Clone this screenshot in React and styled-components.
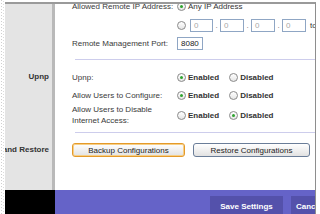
import React from 'react';
import styled, { createGlobalStyle } from 'styled-components';

const GlobalStyle = createGlobalStyle`
  *, *::before, *::after { box-sizing: border-box; }
  html, body {
    margin: 0;
    padding: 0;
    background: #fff;
    overflow: hidden;
  }
  body {
    font-family: "Liberation Sans", Arial, sans-serif;
    font-size: 8px;
    color: #333;
  }
`;

const Screen = styled.div`
    display: flex;
    width: 320px;
    height: 214px;
`;

const Edge = styled.div`
    width: 5px;
    flex-shrink: 0;
    background:
        repeating-linear-gradient(to bottom, #cfcfcf 0 1px, transparent 1px 3px) 1px 0 / 1px 100% no-repeat,
        repeating-linear-gradient(to bottom, transparent 0 1px, #dcdcdc 1px 2px, transparent 2px 3px) 3px 0 / 1px 100% no-repeat;
`;

const Window = styled.div`
    width: 311px;
    height: 212px;
    margin-top: 2px;
    border-top: 2px solid #9a9a9a;
    border-right: 1px solid #8e8e8e;
    display: flex;
    flex-direction: column;
    overflow: hidden;
`;

const Main = styled.div`
    flex: 1;
    display: flex;
    flex-direction: column;
    overflow: hidden;
`;

const Scroll = styled.div`
    flex: 1;
    margin-top: -7px;
    display: flex;
    flex-direction: column;
`;

const Section = styled.div`
    display: flex;
    flex: ${p => (p.$fill ? 1 : 'none')};
`;

const Label = styled.div`
    width: 50px;
    flex-shrink: 0;
    background: #e4e4e4;
    border-right: 3px solid #b9b9b9;
    display: flex;
    justify-content: flex-end;
    align-items: flex-start;
    padding: ${p => p.$top || 0}px 3px 0 0;
    line-height: ${p => p.$lh || 14}px;
    font-weight: bold;
    color: #333;
    white-space: nowrap;
    overflow: hidden;
`;

const Body = styled.div`
    flex: 1;
    min-width: 0;
    padding: ${p => p.$top || 0}px 0 ${p => p.$bottom || 0}px 17px;
`;

const Row = styled.div`
    display: flex;
    align-items: center;
    height: ${p => p.$h}px;
    white-space: nowrap;
`;

const FieldName = styled.div`
    width: 105px;
    flex-shrink: 0;
    line-height: 11px;
    color: #3a3a3a;
`;

const Value = styled.div`
    display: flex;
    align-items: center;
`;

const Option = styled.label`
    display: inline-flex;
    align-items: center;
    gap: 2px;
    margin-right: ${p => (p.$last ? 0 : 10)}px;
    font-weight: ${p => (p.$bold ? 'bold' : 'normal')};
    color: #333;
`;

const RadioMark = styled.span`
    width: 9px;
    height: 9px;
    border-radius: 50%;
    border: 1px solid #8a8a8a;
    background: linear-gradient(#ffffff, #e6e6e6);
    display: inline-flex;
    align-items: center;
    justify-content: center;
    margin-right: ${p => p.$gap || 0}px;

    &::after {
        content: '';
        width: 3px;
        height: 3px;
        border-radius: 50%;
        background: ${p => (p.$on ? '#2fa32f' : 'transparent')};
    }
`;

const IpBox = styled.div`
    width: ${p => p.$w || 24}px;
    height: 13px;
    border: 1px solid #8fa6c4;
    padding-left: 3px;
    line-height: 11px;
    color: ${p => (p.$dim ? '#a8a8a8' : '#222')};
    flex-shrink: 0;
`;

const Dot = styled.span`
    width: 7px;
    text-align: center;
    color: #777;
    flex-shrink: 0;
`;

const RangeWord = styled.span`
    margin-left: 4px;
    color: #333;
`;

const Rule = styled.div`
    height: 1px;
    margin: ${p => p.$top}px 0 0 3px;
    background: #cdcdec;
`;

const Buttons = styled.div`
    display: flex;
    gap: 8px;
    height: 14px;
`;

const Button = styled.button`
    width: ${p => p.$w}px;
    height: 14px;
    padding: 0;
    border: 1px solid ${p => (p.$focus ? '#e49a2a' : '#6a7d98')};
    border-radius: 3px;
    box-shadow: ${p => (p.$focus ? '0 0 0 1px #f7cf86 inset' : 'none')};
    background: linear-gradient(#ffffff, #e2e2e2);
    font-family: "Liberation Sans", Arial, sans-serif;
    font-size: 8px;
    color: #222;
`;

const Footer = styled.div`
    height: 24px;
    flex-shrink: 0;
    display: flex;
`;

const FooterSide = styled.div`
    width: 50px;
    flex-shrink: 0;
    background: #000;
`;

const FooterBar = styled.div`
    flex: 1;
    background: #6563c8;
    display: flex;
    align-items: flex-start;
    gap: 8px;
    padding: 6px 0 0 155px;
    white-space: nowrap;
    overflow: hidden;
`;

const BarButton = styled.button`
    width: ${p => p.$w}px;
    height: 20px;
    flex-shrink: 0;
    border: none;
    padding: 0;
    background: #5451ab;
    color: #fff;
    font-family: "Liberation Sans", Arial, sans-serif;
    font-size: 8px;
    font-weight: bold;
    text-align: ${p => (p.$left ? 'left' : 'center')};
    padding-left: ${p => (p.$left ? 5 : 0)}px;
`;

const Radio = ({ on, children, bold, last }) => (
    <Option $bold={bold} $last={last}>
        <RadioMark $on={on} />
        {children}
    </Option>
);

const Toggle = ({ enabled }) => (
    <Value>
        <Radio on={enabled} bold>Enabled</Radio>
        <Radio on={!enabled} bold last>Disabled</Radio>
    </Value>
);

export default function App() {
    return (
        <>
            <GlobalStyle />
            <Screen>
                <Edge />
                <Window>
                    <Main>
                        <Scroll>
                            <Section>
                                <Label />
                                <Body>
                                    <Row $h={18}>
                                        <FieldName>Allowed Remote IP Address:</FieldName>
                                        <Value>
                                            <Radio on last>Any IP Address</Radio>
                                        </Value>
                                    </Row>
                                    <Row $h={21}>
                                        <FieldName />
                                        <Value>
                                            <RadioMark $gap={4} />
                                            <IpBox $dim $w={23}>0</IpBox>
                                            <Dot>.</Dot>
                                            <IpBox $dim>0</IpBox>
                                            <Dot>.</Dot>
                                            <IpBox $dim>0</IpBox>
                                            <Dot>.</Dot>
                                            <IpBox $dim>0</IpBox>
                                            <RangeWord>to</RangeWord>
                                        </Value>
                                    </Row>
                                    <Row $h={14}>
                                        <FieldName>Remote Management Port:</FieldName>
                                        <IpBox $w={26}>8080</IpBox>
                                    </Row>
                                </Body>
                            </Section>
                            <Section>
                                <Label />
                                <Body><Rule $top={9} /></Body>
                            </Section>
                            <Section>
                                <Label $top={8} $lh={18}>Upnp</Label>
                                <Body $top={8}>
                                    <Row $h={18}>
                                        <FieldName>Upnp:</FieldName>
                                        <Toggle enabled />
                                    </Row>
                                    <Row $h={18}>
                                        <FieldName>Allow Users to Configure:</FieldName>
                                        <Toggle enabled />
                                    </Row>
                                    <Row $h={22}>
                                        <FieldName>Allow Users to Disable<br />Internet Access:</FieldName>
                                        <Toggle enabled={false} />
                                    </Row>
                                </Body>
                            </Section>
                            <Section>
                                <Label />
                                <Body><Rule $top={6} /></Body>
                            </Section>
                            <Section>
                                <Label $top={10} $lh={14}>Backup and Restore</Label>
                                <Body $top={10}>
                                    <Buttons>
                                        <Button $w={113} $focus>Backup Configurations</Button>
                                        <Button $w={117}>Restore Configurations</Button>
                                    </Buttons>
                                </Body>
                            </Section>
                            <Section $fill>
                                <Label />
                                <Body />
                            </Section>
                        </Scroll>
                    </Main>
                    <Footer>
                        <FooterSide />
                        <FooterBar>
                            <BarButton $w={73}>Save Settings</BarButton>
                            <BarButton $w={50} $left>Cancel Changes</BarButton>
                        </FooterBar>
                    </Footer>
                </Window>
            </Screen>
        </>
    );
}
